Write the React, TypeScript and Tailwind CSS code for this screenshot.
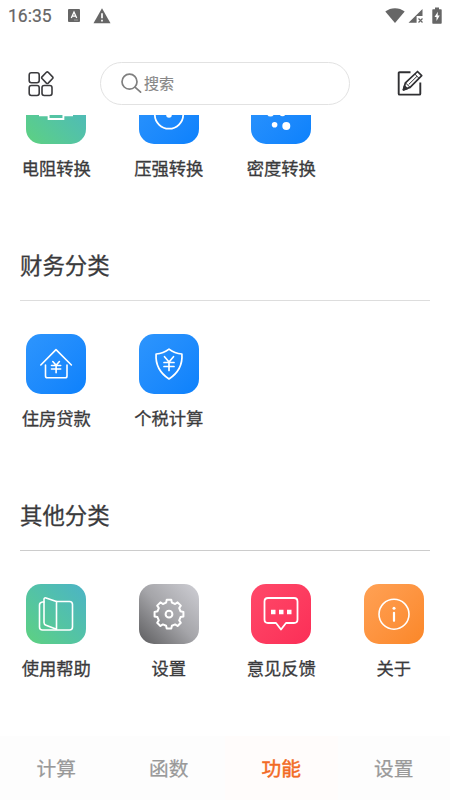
import type { ReactNode } from "react";

function Glyph({ children, width = 1.8 }: { children: ReactNode; width?: number }) {
  return (
    <svg viewBox="0 0 60 60" className="block size-[60px]" fill="none" stroke="white" strokeWidth={width} strokeLinecap="round" strokeLinejoin="round">
      {children}
    </svg>
  );
}

const blue = "bg-linear-to-br from-[#2d95fd] to-[#0c81fc]";
const green = "bg-linear-to-tr from-[#5ed17f] to-[#4cb3c6]";

// Outline of an eight-toothed gear centred on (30, 30.2)
const gearPoints = Array.from({ length: 8 }, (_, tooth) =>
  [
    [-14, 11.9],
    [-9, 14.6],
    [9, 14.6],
    [14, 11.9],
  ].map(([offset, radius]) => {
    const angle = ((tooth * 45 + offset) * Math.PI) / 180;
    return `${(30 + radius * Math.sin(angle)).toFixed(2)},${(30.2 - radius * Math.cos(angle)).toFixed(2)}`;
  }).join(" "),
).join(" ");

function Tile({ label, color, children }: { label: string; color: string; children: ReactNode }) {
  return (
    <div className="flex flex-col items-center">
      <div className={`size-[60px] overflow-hidden rounded-[15px] ${color}`}>{children}</div>
      <span className="mt-[11.5px] text-[17.3px] leading-[24.5px] whitespace-nowrap text-[#3a3a3c] [-webkit-text-stroke:0.3px]">{label}</span>
    </div>
  );
}

function Section({ title, line, children }: { title: string; line: string; children: ReactNode }) {
  return (
    <section className="pt-[70px]">
      <h2 className={`mx-5 h-[51px] border-b text-[22.4px] leading-[28px] text-[#3a3a3c] [-webkit-text-stroke:0.3px] ${line}`}>{title}</h2>
      <div className="grid grid-cols-4 pt-[33px]">{children}</div>
    </section>
  );
}

function StatusBar() {
  return (
    <div className="flex h-[31px] items-center pr-2 pl-2 text-[#666]">
      <span className="w-[60px] pt-[2px] font-[Roboto] text-[17.5px] leading-none [-webkit-text-stroke:0.2px]">16:35</span>
      <svg viewBox="0 0 12 13" className="h-[13px] w-3">
        <rect width="12" height="13" rx="1" fill="currentColor" />
        <path d="M3.3 9 6 3l2.7 6M4.3 7.2h3.4" stroke="white" strokeWidth="1.3" fill="none" />
        <path d="M6 11h4" stroke="#aaa" strokeWidth=".8" />
      </svg>
      <svg viewBox="0 0 18 16" className="ml-[13px] h-4 w-[18px]">
        <path d="M9 .2 17.5 15.2H.5Z" fill="currentColor" />
        <path d="M9 5.2v5M9 11.7v1.7" stroke="white" strokeWidth="1.7" />
      </svg>
      <span className="flex-1" />
      <svg viewBox="0 0 20 16" className="h-4 w-5">
        <path d="M.3 3.6C5.8-.9 14.2-.9 19.7 3.6L10 15.1Z" fill="currentColor" />
      </svg>
      <svg viewBox="0 0 16 16" className="ml-[3px] h-4 w-4">
        <path d="M14.5 1v7H8.6v6.8H.5Z" fill="currentColor" />
        <path d="m10.5 10.5 4 4m0-4-4 4" stroke="currentColor" strokeWidth="1.2" />
      </svg>
      <svg viewBox="0 0 10 17" className="ml-[8px] h-[17px] w-[10px]">
        <path d="M3 .5h4v1.7h2q.7 0 .7.8v13q0 .7-.7.7H1q-.7 0-.7-.7V3q0-.8.7-.8h2Z" fill="currentColor" />
        <path d="M5.8 4.8 2.5 10h2v4L7.7 8.6h-2Z" fill="white" />
      </svg>
    </div>
  );
}

function Header() {
  return (
    <header className="flex h-[84px] items-start px-[28px] pt-[31px]">
      <svg viewBox="0 0 26 26" className="mt-[8.5px] size-[26px]" fill="none" stroke="#3b3b3e" strokeWidth="1.6" strokeLinejoin="round">
        <rect x="1.2" y="1.8" width="10" height="10" rx="2.2" />
        <rect x="1.2" y="14.5" width="10" height="10" rx="2.2" />
        <rect x="14" y="14.5" width="10" height="10" rx="2.2" />
        <path d="M18.4 1.3q.9-.8 1.8 0l4.4 4.6q.7.8 0 1.6l-4.4 4.6q-.9.8-1.8 0L14 7.5q-.7-.8 0-1.6Z" />
      </svg>
      <div className="ml-[46px] flex h-[43px] w-[250px] shrink-0 items-center rounded-full border border-[#e2e2e2] pl-[20px]">
        <svg viewBox="0 0 21 21" className="size-[21px]" fill="none" stroke="#7f7f7f" strokeWidth="1.7" strokeLinecap="round">
          <circle cx="8.5" cy="8.7" r="7.5" />
          <path d="m14 14.2 5.6 5" />
        </svg>
        <span className="ml-[2px] pb-[2px] text-[15px] leading-5 text-[#878787] [-webkit-text-stroke:0.15px]">搜索</span>
      </div>
      <svg viewBox="0 0 26 26" className="mt-[8px] mr-[-0.5px] ml-auto size-[26px]" fill="none" stroke="#303033" strokeWidth="1.9" strokeLinejoin="round">
        <path d="M13.500 2.200H2.600q-.9 0-.9.900v20.600q0 .9.900.9h19.800q.9 0 .9-.9V12.500" />
        <path d="m6.500 19.800 1.900-7L20.500 1.500l4.200 4.200-11.600 11.700Z" strokeWidth="1.7" />
        <path d="m17.800 4 4.300 4.400M8.400 12.800l4.700 4.600M11.700 14.500 20 6.300" strokeWidth="1" />
        <path d="m6.500 19.800 1-3.600 2.500 2.500Z" fill="#303033" />
      </svg>
    </header>
  );
}

export default function App() {
  return (
    <div className="flex h-[800px] w-[450px] flex-col overflow-hidden bg-white font-['Noto_Sans_CJK_SC',sans-serif]">
      <StatusBar />
      <Header />
      <main className="min-h-0 flex-1 overflow-hidden">
        <div className="-mt-[31px] grid grid-cols-4">
          <Tile label="电阻转换" color={green}>
            <Glyph width={1.9}>
              <path d="M13 31.3h9.6V35h14.8v-3.700H47M22.600 31.300V25h14.800v6.300" strokeLinecap="butt" strokeLinejoin="miter" />
            </Glyph>
          </Tile>
          <Tile label="压强转换" color={blue}>
            <Glyph>
              <circle cx="30" cy="30.500" r="14.200" />
              <circle cx="30" cy="31" r="2.800" fill="white" stroke="none" />
            </Glyph>
          </Tile>
          <Tile label="密度转换" color={blue}>
            <Glyph>
              <g fill="white" stroke="none">
                <circle cx="19.500" cy="29" r="3.500" />
                <circle cx="31.500" cy="29.400" r="2.900" />
                <circle cx="23.600" cy="40.700" r="2.800" />
                <circle cx="35.300" cy="41.900" r="4" />
              </g>
            </Glyph>
          </Tile>
        </div>
        <Section title="财务分类" line="border-[#dddddd]">
          <Tile label="住房贷款" color={blue}>
            <Glyph width={1.6}>
              <path d="M14.800 31 30 15.600 45.400 31M19.500 31v11q0 1.800 1.800 1.800h17.900q1.800 0 1.800-1.800V31" />
              <path d="m26.800 27.500 3.300 3.800 3.300-3.800M25.500 31.500h9.200M25.500 35h9.200M30.100 31.300v7.500" />
            </Glyph>
          </Tile>
          <Tile label="个税计算" color={blue}>
            <Glyph width={1.7}>
              <path d="M30 15.200q5.500 4.300 12.900 4.800 1.200 15.700-12.900 25Q16 35.700 17.100 20 24.500 19.500 30 15.200Z" />
              <path d="m25.500 22.700 4.500 5.300 4.500-5.300M25 28.500h10M25 32.500h10M30 28v8.500" />
            </Glyph>
          </Tile>
        </Section>
        <Section title="其他分类" line="border-[#cccccc]">
          <Tile label="使用帮助" color={green}>
            <Glyph width={1.6}>
              <path d="M30.500 17.500h13q3 0 3 3v22.500q0 3-3 3h-27q-3 0-3-3v-22q0-2.700 3-3h1.500" />
              <path d="M30.500 17.500v27.800L20 41.200q-2-.8-2-2.700V15.500q0-2.200 2-1.500Z" />
            </Glyph>
          </Tile>
          <Tile label="设置" color="bg-linear-to-tr from-[#5d5d5f] via-[#a5a5a9] via-50% to-[#cfcfd5]">
            <Glyph width={2}>
              <polygon points={gearPoints} />
              <circle cx="30" cy="30.200" r="3.400" />
            </Glyph>
          </Tile>
          <Tile label="意见反馈" color="bg-linear-to-br from-[#ff4869] to-[#fb2e57]">
            <Glyph>
              <path d="M17 14h26q3.500 0 3.500 3.500v18Q46.500 39 43 39h-8l-5 6.500-5-6.500h-8q-3.500 0-3.500-3.500v-18Q13.500 14 17 14Z" />
              <path d="M20 25.700h4.500v4.500H20ZM28 25.700h4.500v4.500H28ZM36 25.700h4.500v4.500H36Z" fill="white" stroke="none" />
            </Glyph>
          </Tile>
          <Tile label="关于" color="bg-linear-to-br from-[#ffa154] to-[#fb8727]">
            <Glyph width={1.6}>
              <circle cx="30" cy="30.200" r="15" />
              <path d="M30 28.800v8" strokeWidth="2.200" />
              <circle cx="30" cy="24.300" r="1.500" fill="white" stroke="none" />
            </Glyph>
          </Tile>
        </Section>
      </main>
      <nav className="grid h-16 grid-cols-4 bg-[#fdfdfd] text-center text-[19.7px] leading-[64px] text-[#999] [-webkit-text-stroke:0.25px]">
        <span>计算</span>
        <span>函数</span>
        <span className="bg-[#fffcfb] text-[#f26a25] [-webkit-text-stroke:0.5px]">功能</span>
        <span>设置</span>
      </nav>
    </div>
  );
}
